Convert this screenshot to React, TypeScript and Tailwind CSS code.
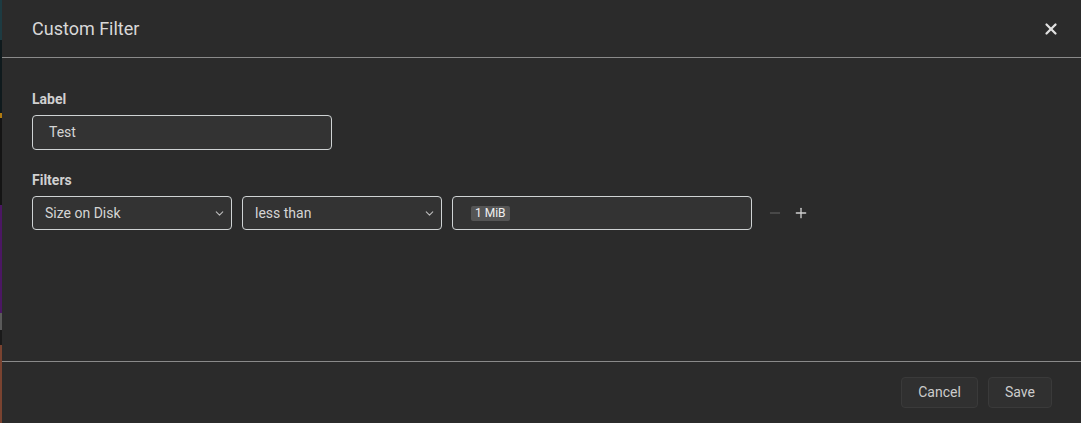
import { ChevronDown, X, Minus, Plus } from 'lucide-react';

const strip = [
    'h-[40px] bg-[#1d3b42]',
    'h-[73px] bg-[#0f1a1d]',
    'h-[5px] bg-[#b07a10]',
    'h-[87px] bg-[#141414]',
    'h-[108px] bg-[#4b1763]',
    'h-[17px] bg-[#5a5a5a]',
    'h-[15px] bg-[#1a1a1a]',
    'flex-1 bg-[#7a4330]',
];

const SelectBox = (props: { value: string }) => (
    <div className="flex h-[34px] w-[200px] items-center justify-between rounded-[4px] border border-[#cfd3d4] bg-[#333333] pl-3 pr-[5px] text-[14px] text-[#d5d5d5]">
        <span>{props.value}</span>
        <ChevronDown className="h-[13px] w-[13px] text-[#bbbbbb]" strokeWidth={2} />
    </div>
);

export default function App() {
    return (
        <div className="flex h-[423px] w-[1081px] overflow-hidden font-['Roboto',sans-serif]">
            <div className="flex w-[2px] flex-col">
                {strip.map((c) => (
                    <div key={c} className={c} />
                ))}
            </div>
            <div className="flex flex-1 flex-col bg-[#2b2b2b] text-[#d5d5d5]">
                <div className="flex h-[58px] items-center justify-between border-b border-[#8a8a8a] pl-[30px] pr-[21px]">
                    <h1 className="text-[18px] text-[#d8d8d8]">Custom Filter</h1>
                    <X className="h-[18px] w-[18px] text-[#e0e0e0]" strokeWidth={3} />
                </div>
                <div className="flex flex-1 flex-col border-b border-[#8a8a8a] px-[30px] pt-[32px]">
                    <label className="text-[14px] leading-[18px] font-bold text-[#d0d0d0]">Label</label>
                    <div className="mt-[7px] flex h-[35px] w-[300px] items-center rounded-[4px] border border-[#cfd3d4] bg-[#333333] px-4 text-[14px] text-[#d5d5d5]">
                        Test
                    </div>
                    <label className="mt-[21px] text-[14px] leading-[18px] font-bold text-[#d0d0d0]">Filters</label>
                    <div className="mt-[7px] flex items-center gap-[10px]">
                        <SelectBox value="Size on Disk" />
                        <SelectBox value="less than" />
                        <div className="flex h-[34px] w-[300px] items-center rounded-[4px] border border-[#cfd3d4] bg-[#333333] pl-[18px]">
                            <span className="rounded-[2px] bg-[#555555] px-[4px] text-[12px] leading-[15px] text-[#f0f0f0]">1 MiB</span>
                        </div>
                        <div className="ml-[5px] flex items-center gap-[10px]">
                            <Minus className="h-[16px] w-[16px] text-[#666666]" strokeWidth={1.5} />
                            <Plus className="h-[16px] w-[16px] text-[#d0d0d0]" strokeWidth={2} />
                        </div>
                    </div>
                </div>
                <div className="flex h-[61px] items-start justify-end gap-[10px] pt-[15px] pr-[29px]">
                    <button className="h-[31px] w-[77px] rounded-[4px] border border-[#3a3a3a] bg-[#303030] text-[14px] text-[#cccccc]">
                        Cancel
                    </button>
                    <button className="h-[31px] w-[64px] rounded-[4px] border border-[#3a3a3a] bg-[#303030] text-[14px] text-[#cccccc]">
                        Save
                    </button>
                </div>
            </div>
        </div>
    );
}
